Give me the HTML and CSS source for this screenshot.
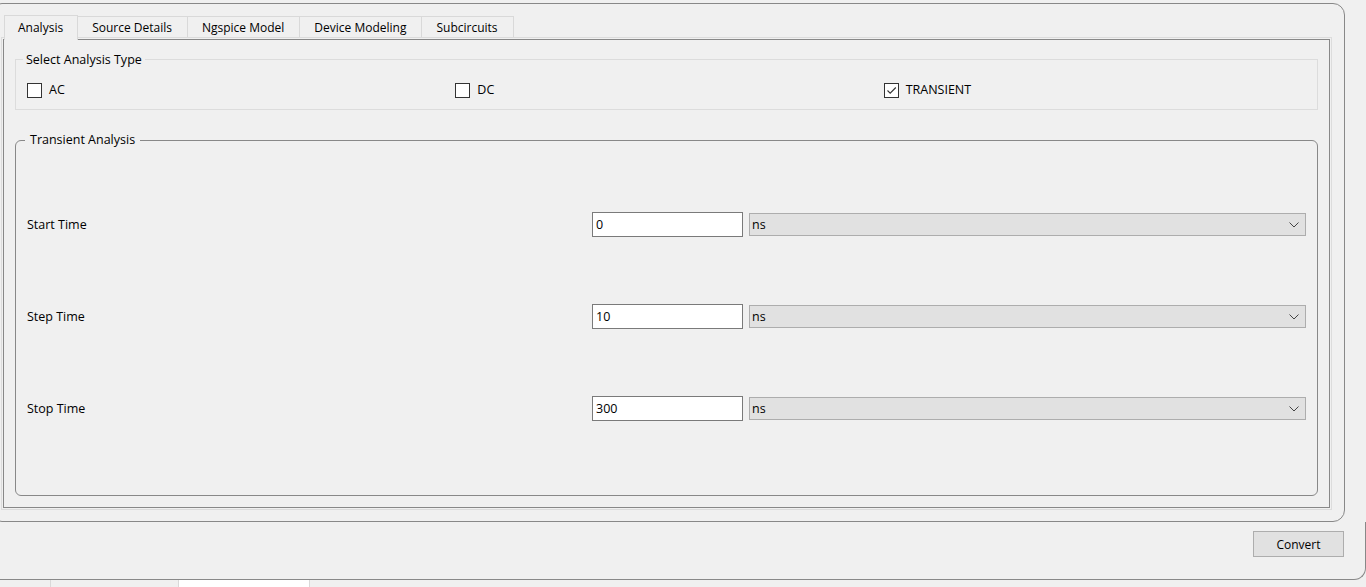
FILE: index.html
```html
<!DOCTYPE html>
<html lang="en">
<head>
<meta charset="utf-8">
<title>Kicad to Ngspice Converter</title>
<link rel="stylesheet" href="styles.css">
</head>
<body>
<div class="app">
  <div class="main-frame">
    <div class="tabwidget">
      <div class="tabbar">
        <div class="tab active">Analysis</div>
        <div class="tab">Source Details</div>
        <div class="tab">Ngspice Model</div>
        <div class="tab">Device Modeling</div>
        <div class="tab">Subcircuits</div>
      </div>
      <div class="pane">
        <div class="pane-inner">
          <fieldset class="group group-flat">
            <legend>Select Analysis Type</legend>
            <div class="check-grid">
              <label class="check"><span class="box"></span>AC</label>
              <label class="check"><span class="box"></span>DC</label>
              <label class="check"><span class="box"><svg viewBox="0 0 13 13" width="13" height="13"><path d="M2.5 6.5 L5.2 9.2 L10.8 3.5" fill="none" stroke="#333" stroke-width="1.1"/></svg></span>TRANSIENT</label>
            </div>
          </fieldset>
          <fieldset class="group group-round">
            <legend>Transient Analysis</legend>
            <div class="param-grid">
              <div class="param-label">Start Time</div>
              <input class="field" type="text" value="0">
              <div class="combo"><span>ns</span><svg class="chev" viewBox="0 0 10 6" width="10" height="6"><path d="M0.5 0.5 L5 5 L9.5 0.5" fill="none" stroke="#444" stroke-width="1"/></svg></div>

              <div class="param-label">Step Time</div>
              <input class="field" type="text" value="10">
              <div class="combo"><span>ns</span><svg class="chev" viewBox="0 0 10 6" width="10" height="6"><path d="M0.5 0.5 L5 5 L9.5 0.5" fill="none" stroke="#444" stroke-width="1"/></svg></div>

              <div class="param-label">Stop Time</div>
              <input class="field" type="text" value="300">
              <div class="combo"><span>ns</span><svg class="chev" viewBox="0 0 10 6" width="10" height="6"><path d="M0.5 0.5 L5 5 L9.5 0.5" fill="none" stroke="#444" stroke-width="1"/></svg></div>
            </div>
          </fieldset>
        </div>
      </div>
    </div>
  </div>
  <div class="footer">
    <button class="btn" type="button">Convert</button>
  </div>
</div>
<div class="bottom-tabs">
  <div class="btab btab-a"></div>
  <div class="btab btab-b"></div>
  <div class="btab btab-c"></div>
  <div class="btab-rest"></div>
</div>
</body>
</html>
```
FILE: styles.css
```css
html, body {
  margin: 0;
  padding: 0;
}
body {
  background: #f0f0f0;
  font-family: "Open Sans", "Noto Sans", sans-serif;
  font-size: 12.5px;
  color: #000;
  height: 587px;
  overflow: hidden;
}
.app {
  display: flex;
  flex-direction: column;
  height: 580px;
}
.main-frame {
  margin: 3px 0 0 -10px;
  width: 1355px;
  height: 519px;
  flex: none;
  box-sizing: border-box;
  border: 1px solid #888;
  border-radius: 12px;
  padding: 11px 0 0 10px;
}
.tabwidget {
  width: 1331px;
}
.tabbar {
  display: flex;
  align-items: flex-end;
  height: 22px;
  padding-left: 3px;
}
.tab {
  height: 21px;
  box-sizing: border-box;
  border: 1px solid #d9d9d9;
  border-bottom: 0;
  padding: 1px 15px 0 14px;
  margin-left: -1px;
  display: flex;
  align-items: center;
  line-height: 16px;
  font-size: 12px;
  white-space: nowrap;
}
.tab.active {
  height: 25px;
  margin-bottom: -3px;
  margin-left: 0;
  padding: 0 14px 1px 13px;
  position: relative;
  z-index: 1;
  background: #f0f0f0;
}
.pane {
  height: 473px;
  box-sizing: border-box;
  border: 1px solid #dcdcdc;
  padding: 1px;
}
.pane-inner {
  height: 100%;
  box-sizing: border-box;
  border: 1px solid #888;
  padding: 11px 11px 0 11px;
}
.group {
  margin: 0;
  padding: 0;
  min-width: 0;
  box-sizing: border-box;
}
.group legend {
  line-height: 16px;
}
.group-flat {
  height: 59px;
  border: 1px solid #dcdcdc;
}
.group-flat legend {
  margin-left: 7px;
  padding: 1px 3px 0;
}
.check-grid {
  display: grid;
  grid-template-columns: repeat(3, 1fr);
  padding: 14px 5px 0 11px;
}
.check {
  display: flex;
  align-items: center;
  gap: 7px;
  line-height: 16px;
}
.box {
  width: 15px;
  height: 15px;
  box-sizing: border-box;
  border: 1px solid #333;
  background: #fff;
  display: flex;
  align-items: center;
  justify-content: center;
}
.box svg {
  display: block;
}
.group-round {
  margin-top: 22px;
  height: 364px;
  border: 1px solid #888;
  border-radius: 6px;
}
.group-round legend {
  margin-left: 9px;
  padding: 0 5px;
}
.param-grid {
  display: grid;
  grid-template-columns: 1fr 151px 563px;
  grid-auto-rows: 25px;
  row-gap: 67px;
  align-items: center;
  padding: 64px 11px 0 11px;
}
.param-label {
  line-height: 16px;
}
.field {
  height: 25px;
  width: 151px;
  box-sizing: border-box;
  border: 1px solid #7a7a7a;
  background: #fff;
  padding: 0 3px;
  margin: 0;
  font: inherit;
  color: #000;
  outline: none;
}
.combo {
  margin-left: 6px;
  height: 23px;
  box-sizing: border-box;
  border: 1px solid #adadad;
  background: #e1e1e1;
  display: flex;
  align-items: center;
  justify-content: space-between;
  padding: 0 6px 0 2px;
}
.chev {
  display: block;
}
.footer {
  height: 58px;
  flex: none;
  box-sizing: border-box;
  border-right: 1px solid #888;
  border-bottom: 1px solid #888;
  border-bottom-right-radius: 12px;
  display: flex;
  justify-content: flex-end;
  align-items: flex-start;
  padding: 9px 21px 0 0;
}
.btn {
  width: 91px;
  height: 26px;
  box-sizing: border-box;
  border: 1px solid #adadad;
  background: #e1e1e1;
  font-family: inherit;
  font-size: 12px;
  color: #000;
  padding: 0;
  margin: 0;
}
.bottom-tabs {
  display: flex;
  height: 7px;
}
.btab {
  box-sizing: border-box;
  border-right: 1px solid #d9d9d9;
}
.btab-a {
  width: 51px;
}
.btab-b {
  width: 128px;
}
.btab-c {
  width: 131px;
  background: #fff;
}
.btab-rest {
  flex: 1;
}
```
